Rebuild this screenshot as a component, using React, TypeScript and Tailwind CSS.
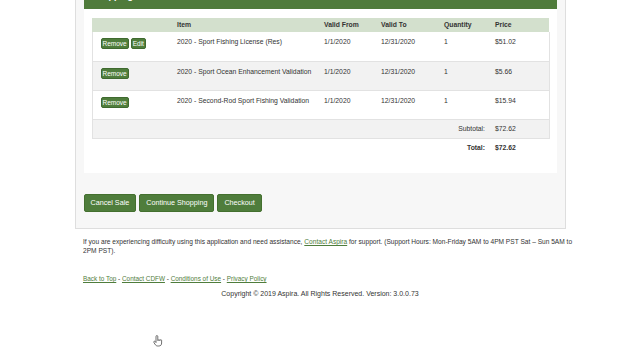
import React from 'react';

interface CartItem {
  name: string;
  from: string;
  to: string;
  qty: number;
  price: string;
  editable?: boolean;
}

const items: CartItem[] = [
  { name: '2020 - Sport Fishing License (Res)', from: '1/1/2020', to: '12/31/2020', qty: 1, price: '$51.02', editable: true },
  { name: '2020 - Sport Ocean Enhancement Validation', from: '1/1/2020', to: '12/31/2020', qty: 1, price: '$5.66' },
  { name: '2020 - Second-Rod Sport Fishing Validation', from: '1/1/2020', to: '12/31/2020', qty: 1, price: '$15.94' },
];

const SmallButton: React.FC<{ label: string }> = ({ label }) => (
  <button className="h-[11px] px-[1px] rounded-[2px] bg-[#4f7d3c] text-white text-[6.5px] leading-[10px] border border-[#3f6a2f]">
    {label}
  </button>
);

const BigButton: React.FC<{ label: string }> = ({ label }) => (
  <button className="h-[18px] px-[6px] rounded-[2px] bg-[#4f7d3c] text-white text-[7.2px] leading-[16px] border border-[#44702f]">
    {label}
  </button>
);

const Cursor: React.FC = () => (
  <svg className="absolute left-[153px] top-[335px]" width="10" height="12" viewBox="0 0 10 12">
    <path
      d="M3 1.5 a0.9 0.9 0 0 1 1.8 0 V5.5 h0.4 a0.8 0.8 0 0 1 1.6 0 h0.2 a0.8 0.8 0 0 1 1.6 0 V8 C8.6 10 7.6 11 5.6 11 H4.6 C3.4 11 2.6 10.2 1.8 9 L0.9 7.4 a0.8 0.8 0 0 1 1.4 -0.8 L3 7.5 Z"
      fill="white"
      stroke="#333"
      strokeWidth="0.7"
    />
  </svg>
);

const App: React.FC = () => {
  return (
    <div
      className="relative w-[640px] h-[360px] overflow-hidden bg-white text-[#333]"
      style={{ fontFamily: '"Liberation Sans", Arial, sans-serif' }}
    >
      <div className="w-[491px] mx-auto -mt-[12px] bg-[#f7f7f7] border border-[#dedede] px-[8px] pb-[16px]">
        <div className="h-[20px] bg-[#4f7b3b] text-white font-bold text-[9px] leading-[14px] px-[8px]">
          Shopping Cart
        </div>
        <div className="bg-white px-[8px] pt-[9px] pb-[16px]">
          <table className="w-[457px] table-fixed border-collapse text-[6.8px] leading-[10px]">
            <colgroup>
              <col className="w-[77px]" />
              <col className="w-[147px]" />
              <col className="w-[57px]" />
              <col className="w-[63px]" />
              <col className="w-[51px]" />
              <col className="w-[62px]" />
            </colgroup>
            <thead>
              <tr className="h-[14px] bg-[#d3e0cd] font-bold text-left">
                <th className="px-[8px]"></th>
                <th className="px-[8px]">Item</th>
                <th className="px-[8px]">Valid From</th>
                <th className="px-[8px]">Valid To</th>
                <th className="px-[8px]">Quantity</th>
                <th className="px-[8px]">Price</th>
              </tr>
            </thead>
            <tbody>
              {items.map((item, index) => (
                <tr
                  key={index}
                  className={`h-[29px] border-x border-b border-[#e2e2e2] align-top ${index % 2 === 1 ? 'bg-[#f2f2f2]' : 'bg-white'}`}
                >
                  <td className="px-[8px] pt-[6px]">
                    <div className="flex gap-[2px]">
                      <SmallButton label="Remove" />
                      {item.editable && <SmallButton label="Edit" />}
                    </div>
                  </td>
                  <td className="pl-[8px] pr-0 pt-[5px] whitespace-nowrap">{item.name}</td>
                  <td className="px-[8px] pt-[5px]">{item.from}</td>
                  <td className="px-[8px] pt-[5px]">{item.to}</td>
                  <td className="px-[8px] pt-[5px]">{item.qty}</td>
                  <td className="px-[8px] pt-[5px]">{item.price}</td>
                </tr>
              ))}
              <tr className="h-[19px] bg-[#f2f2f2] border-x border-b border-[#e2e2e2]">
                <td colSpan={4}></td>
                <td className="pl-[8px] pr-[2px] text-right">Subtotal:</td>
                <td className="px-[8px]">$72.62</td>
              </tr>
              <tr className="h-[19px] font-bold">
                <td colSpan={4}></td>
                <td className="pl-[8px] pr-[2px] text-right">Total:</td>
                <td className="px-[8px]">$72.62</td>
              </tr>
            </tbody>
          </table>
        </div>
        <div className="flex gap-[3px] mt-[21px]">
          <BigButton label="Cancel Sale" />
          <BigButton label="Continue Shopping" />
          <BigButton label="Checkout" />
        </div>
      </div>

      <div className="w-[500px] ml-[83px] mt-[8px] text-[6.6px] leading-[9px]">
        If you are experiencing difficulty using this application and need assistance,{' '}
        <a className="text-[#4f7d3c] underline">Contact Aspira</a> for support. (Support Hours: Mon-Friday
        5AM to 4PM PST Sat – Sun 5AM to 2PM PST).
      </div>

      <div className="ml-[83px] mt-[19px] text-[6.4px] leading-[9px]">
        <a className="text-[#4f7d3c] underline">Back to Top</a> -{' '}
        <a className="text-[#4f7d3c] underline">Contact CDFW</a> -{' '}
        <a className="text-[#4f7d3c] underline">Conditions of Use</a> -{' '}
        <a className="text-[#4f7d3c] underline">Privacy Policy</a>
      </div>
      <div className="mt-[6px] text-center text-[7px] leading-[9px]">
        Copyright © 2019 Aspira. All Rights Reserved. Version: 3.0.0.73
      </div>

      <Cursor />
    </div>
  );
};

export default App;
